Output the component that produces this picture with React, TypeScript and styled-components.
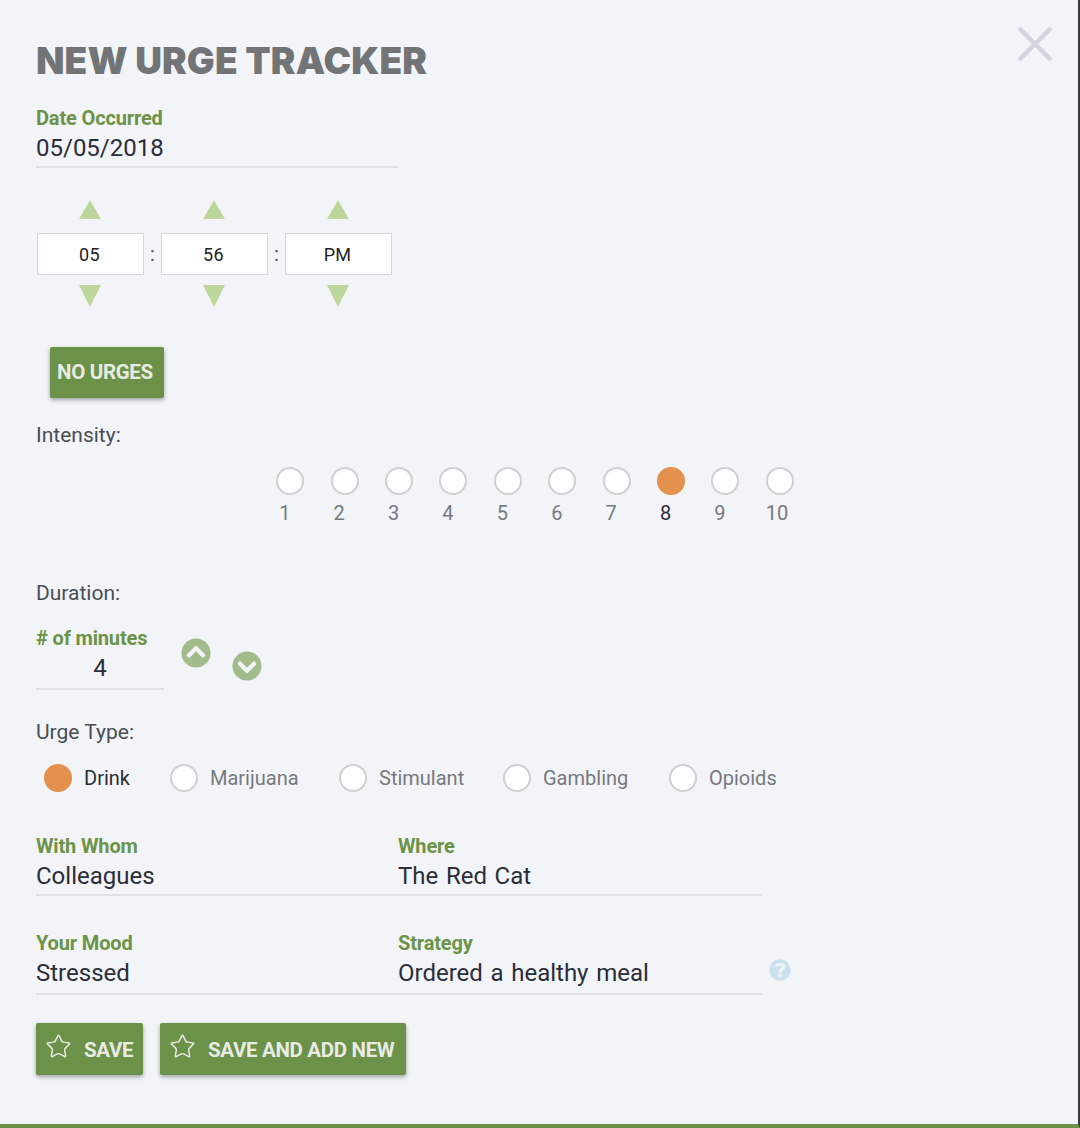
import React from "react";
import styled, { createGlobalStyle } from "styled-components";
import { FaChevronCircleDown, FaChevronCircleUp, FaQuestionCircle } from "react-icons/fa";
import { Star } from "lucide-react";

const GlobalStyle = createGlobalStyle`
  html, body {
    margin: 0;
    padding: 0;
    background: #f2f4f8;
  }
  * {
    box-sizing: border-box;
  }
`;

const Modal = styled.div`
  position: relative;
  width: 1080px;
  height: 1128px;
  padding: 39px 0 0 36px;
  background: #f2f4f8;
  border-right: 2px solid #3a3a3a;
  border-bottom: 4px solid #6c9148;
  font-family: Roboto, "Liberation Sans", sans-serif;
  overflow: hidden;
`;

const CloseButton = styled.button`
  position: absolute;
  top: 25px;
  right: 24px;
  width: 38px;
  height: 38px;
  padding: 0;
  border: 0;
  background: none;
`;

const Title = styled.h1`
  margin: 0 0 24px;
  font-family: Inter, "Liberation Sans", sans-serif;
  font-size: 37px;
  line-height: 44px;
  font-weight: 900;
  letter-spacing: 0.15px;
  color: #737476;
`;

const Field = styled.div<{ $width?: number }>`
  width: ${(p) => (p.$width ? `${p.$width}px` : "auto")};
`;

const FieldLabel = styled.label`
  display: block;
  height: 22px;
  margin-bottom: 2px;
  font-size: 20px;
  line-height: 23px;
  font-weight: 700;
  letter-spacing: -0.15px;
  color: #6c9347;
`;

const FieldValue = styled.div<{ $center?: boolean; $height?: number }>`
  height: ${(p) => p.$height ?? 37}px;
  padding-top: 1px;
  border-bottom: 2px solid #e0e1e6;
  font-size: 24px;
  line-height: 32px;
  word-spacing: 1.7px;
  color: #2b2d38;
  text-align: ${(p) => (p.$center ? "center" : "left")};
`;

const TimePicker = styled.div`
  display: flex;
  margin: 32px 0 0 1px;
`;

const TimeColumn = styled.div`
  display: flex;
  flex-direction: column;
  align-items: center;
  width: 107px;
`;

const Triangle = styled.div<{ $down?: boolean }>`
  width: 0;
  height: 0;
  margin-right: 2px;
  border-left: 11px solid transparent;
  border-right: 11px solid transparent;
  ${(p) =>
    p.$down
      ? "border-top: 22px solid #bdd69b; margin-top: 10px;"
      : "border-bottom: 19px solid #bdd69b; margin-bottom: 14px;"}
`;

const TimeBox = styled.div`
  width: 100%;
  height: 42px;
  padding-right: 2px;
  border: 1px solid #d6d6d6;
  background: #fff;
  font-size: 18px;
  line-height: 42px;
  letter-spacing: 0.3px;
  text-align: center;
  color: #222;
`;

const Colon = styled.div`
  width: 17px;
  margin-top: 33px;
  font-size: 20px;
  line-height: 42px;
  text-align: center;
  color: #55575c;
`;

const GreenButton = styled.button`
  display: flex;
  align-items: center;
  height: 52px;
  border: 0;
  border-radius: 2px;
  background: #6c9148;
  box-shadow: 0 2px 4px rgba(0, 0, 0, 0.35);
  font-family: Roboto, "Liberation Sans", sans-serif;
  font-size: 20.5px;
  font-weight: 700;
  letter-spacing: -0.33px;
  color: #e8ebe4;
`;

const NoUrgesButton = styled(GreenButton)`
  width: 114px;
  height: 51px;
  margin: 40px 0 0 14px;
  padding: 0 0 2px 7px;
`;

const SectionLabel = styled.div<{ $top: number }>`
  margin-top: ${(p) => p.$top}px;
  font-size: 21px;
  line-height: 30px;
  height: 28px;
  color: #4a4d55;
`;

const IntensityScale = styled.div`
  display: grid;
  grid-template-columns: repeat(10, 54.4px);
  margin: 19px 0 0 240.2px;
`;

const IntensityItem = styled.div`
  display: flex;
  flex-direction: column;
`;

const Radio = styled.span<{ $checked?: boolean }>`
  display: block;
  flex: none;
  width: 28px;
  height: 28px;
  border-radius: 50%;
  border: 2px solid ${(p) => (p.$checked ? "#e3914c" : "#d0d0d0")};
  background: ${(p) => (p.$checked ? "#e3914c" : "#fff")};
`;

const IntensityNumber = styled.span<{ $checked?: boolean; $wide?: boolean }>`
  margin: 6px 0 0 ${(p) => (p.$wide ? 0 : 3)}px;
  font-size: 20px;
  line-height: 24px;
  color: ${(p) => (p.$checked ? "#2b2d38" : "#77797e")};
`;

const DurationRow = styled.div`
  display: flex;
  align-items: flex-start;
  margin-top: 21px;
`;

const StepButton = styled.button<{ $drop: number; $gap: number }>`
  display: block;
  width: 30px;
  height: 30px;
  margin: ${(p) => p.$drop}px 0 0 ${(p) => p.$gap}px;
  padding: 0;
  border: 0;
  background: none;
  color: #a1bb8a;
  font-size: 30px;
  line-height: 0;
`;

const UrgeTypes = styled.div`
  display: flex;
  margin: 19px 0 0 8px;
`;

const UrgeOption = styled.div<{ $width: number }>`
  display: flex;
  align-items: center;
  gap: 12px;
  width: ${(p) => p.$width}px;
`;

const UrgeName = styled.span<{ $checked?: boolean }>`
  font-size: 20px;
  line-height: 28px;
  color: ${(p) => (p.$checked ? "#2b2d38" : "#77797e")};
`;

const FieldGrid = styled.div`
  position: relative;
  display: grid;
  grid-template-columns: 362px 364px;
  row-gap: 36px;
  width: 726px;
  margin-top: 43px;
`;

const HelpIcon = styled.span`
  position: absolute;
  left: 733px;
  bottom: 14px;
  font-size: 22px;
  line-height: 0;
  color: #c9e2f0;
`;

const Actions = styled.div`
  display: flex;
  gap: 17px;
  margin-top: 28px;
`;

const SaveButton = styled(GreenButton)<{ $width: number }>`
  gap: 12px;
  width: ${(p) => p.$width}px;
  padding: 1px 0 0 9px;

  svg {
    margin-top: -6px;
  }
`;

const urgeTypes = [
  { name: "Drink", width: 126, checked: true },
  { name: "Marijuana", width: 169 },
  { name: "Stimulant", width: 164 },
  { name: "Gambling", width: 166 },
  { name: "Opioids", width: 120 },
];

const time = ["05", "56", "PM"];

export default function App() {
  return (
    <>
      <GlobalStyle />
      <Modal>
        <CloseButton aria-label="Close">
          <svg width="38" height="38" viewBox="0 0 38 38">
            <path d="M3 3 L35 35 M35 3 L3 35" stroke="#d3d5e3" strokeWidth="4.5" fill="none" />
          </svg>
        </CloseButton>
        <Title>NEW URGE TRACKER</Title>

        <Field $width={362}>
          <FieldLabel>Date Occurred</FieldLabel>
          <FieldValue>05/05/2018</FieldValue>
        </Field>

        <TimePicker>
          {time.map((t, i) => (
            <React.Fragment key={t}>
              {i > 0 && <Colon>:</Colon>}
              <TimeColumn>
                <Triangle />
                <TimeBox>{t}</TimeBox>
                <Triangle $down />
              </TimeColumn>
            </React.Fragment>
          ))}
        </TimePicker>

        <NoUrgesButton>NO URGES</NoUrgesButton>

        <SectionLabel $top={22}>Intensity:</SectionLabel>
        <IntensityScale>
          {Array.from({ length: 10 }, (_, i) => i + 1).map((n) => (
            <IntensityItem key={n}>
              <Radio $checked={n === 8} />
              <IntensityNumber $checked={n === 8} $wide={n === 10}>
                {n}
              </IntensityNumber>
            </IntensityItem>
          ))}
        </IntensityScale>

        <SectionLabel $top={53}>Duration:</SectionLabel>
        <DurationRow>
          <Field $width={128}>
            <FieldLabel># of minutes</FieldLabel>
            <FieldValue $center $height={39}>
              4
            </FieldValue>
          </Field>
          <StepButton $drop={11} $gap={17} aria-label="Increase">
            <FaChevronCircleUp />
          </StepButton>
          <StepButton $drop={24} $gap={21} aria-label="Decrease">
            <FaChevronCircleDown />
          </StepButton>
        </DurationRow>

        <SectionLabel $top={27}>Urge Type:</SectionLabel>
        <UrgeTypes>
          {urgeTypes.map((u) => (
            <UrgeOption key={u.name} $width={u.width}>
              <Radio $checked={u.checked} />
              <UrgeName $checked={u.checked}>{u.name}</UrgeName>
            </UrgeOption>
          ))}
        </UrgeTypes>

        <FieldGrid>
          <Field>
            <FieldLabel>With Whom</FieldLabel>
            <FieldValue>Colleagues</FieldValue>
          </Field>
          <Field>
            <FieldLabel>Where</FieldLabel>
            <FieldValue>The Red Cat</FieldValue>
          </Field>
          <Field>
            <FieldLabel>Your Mood</FieldLabel>
            <FieldValue $height={39}>Stressed</FieldValue>
          </Field>
          <Field>
            <FieldLabel>Strategy</FieldLabel>
            <FieldValue $height={39}>Ordered a healthy meal</FieldValue>
          </Field>
          <HelpIcon>
            <FaQuestionCircle />
          </HelpIcon>
        </FieldGrid>

        <Actions>
          <SaveButton $width={107}>
            <Star size={27} strokeWidth={1.3} />
            SAVE
          </SaveButton>
          <SaveButton $width={246}>
            <Star size={27} strokeWidth={1.3} />
            SAVE AND ADD NEW
          </SaveButton>
        </Actions>
      </Modal>
    </>
  );
}
